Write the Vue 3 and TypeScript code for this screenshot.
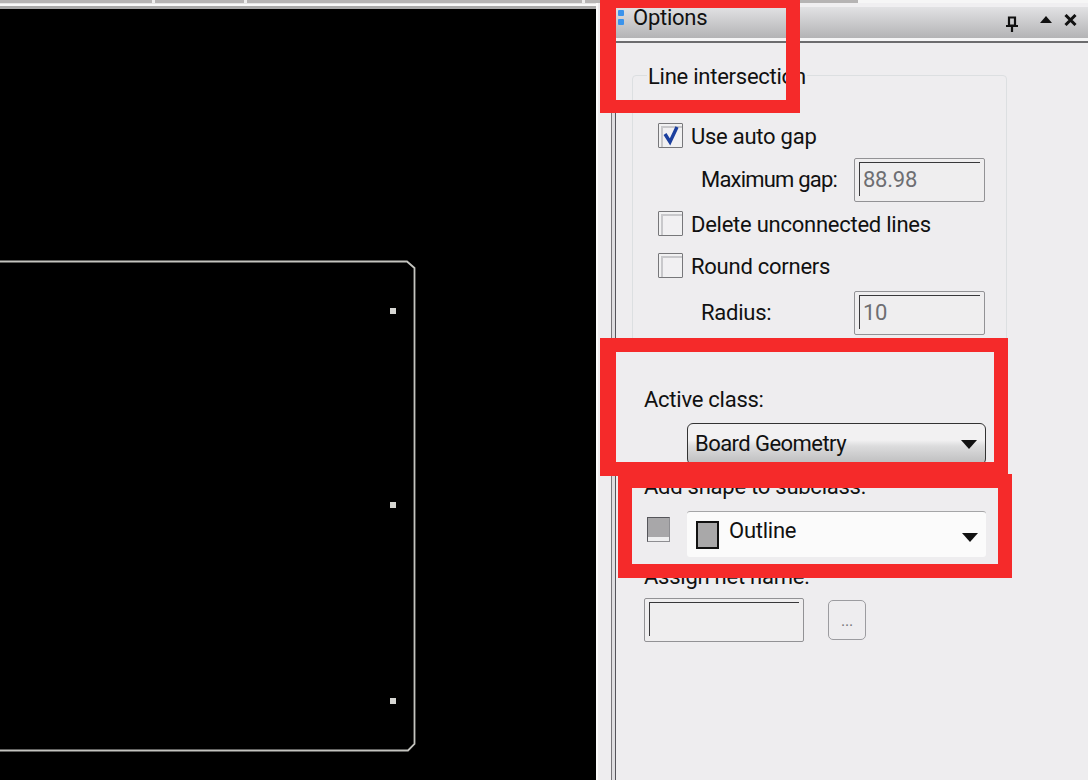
<script setup lang="ts">
// 选项面板截图复刻：左侧黑色画布 + 右侧 Options 面板 + 红色标注框
const pads: number[] = [308, 502, 698]
const topTabs: number[] = [155, 92, 338]
</script>

<template>
  <div class="app">
    <div class="top-strip">
      <div v-for="(w, i) in topTabs" :key="i" class="top-tab" :style="{ width: w + 'px' }" />
      <div class="top-rest" />
    </div>

    <div class="main">
      <div class="left">
        <div class="left-strip" />
        <div class="canvas">
          <svg class="board" width="596" height="771" viewBox="0 0 596 771">
            <path
              d="M-2 252.5H407L414.5 259V735L408 741.5H-2"
              fill="none"
              stroke="#c4c4bf"
              stroke-width="1.8"
            />
          </svg>
          <i v-for="y in pads" :key="y" class="pad" :style="{ top: y - 9 + 'px' }" />
        </div>
      </div>

      <div class="gutter" />

      <div class="panel">
        <div class="title-bar">
          <span class="grip"><i /><i /></span>
          <span class="title">Options</span>
          <span class="title-icons">
            <svg class="ic-pin" width="14" height="16" viewBox="0 0 14 16">
              <path d="M4 1.5H10V9.5H4ZM1 10H13M7 10V16" fill="none" stroke="#111" stroke-width="2.2" />
            </svg>
            <svg class="ic-up" width="12" height="7" viewBox="0 0 12 7">
              <path d="M6 0L12 7H0Z" fill="#111" />
            </svg>
            <svg class="ic-x" width="13" height="12" viewBox="0 0 13 12">
              <path d="M1.5 1L11.5 11M11.5 1L1.5 11" fill="none" stroke="#111" stroke-width="3" />
            </svg>
          </span>
        </div>

        <div class="panel-body">
          <div class="group">
            <span class="legend">Line intersection</span>
            <div class="row">
              <span class="check">
                <svg width="23" height="23" viewBox="0 0 23 23">
                  <path d="M6 10L11 18L18 3" fill="none" stroke="#1b3f9e" stroke-width="3.4" />
                </svg>
              </span>
              <span class="text">Use auto gap</span>
            </div>
            <div class="row sub r2">
              <span class="text tight">Maximum gap:</span>
              <span class="field"><span class="field-in">88.98</span></span>
            </div>
            <div class="row r3">
              <span class="check" />
              <span class="text">Delete unconnected lines</span>
            </div>
            <div class="row r4">
              <span class="check" />
              <span class="text">Round corners</span>
            </div>
            <div class="row sub r5">
              <span class="text">Radius:</span>
              <span class="field"><span class="field-in">10</span></span>
            </div>
          </div>

          <div class="label l-active">Active class:</div>
          <div class="select select-a">
            <span class="select-text">Board Geometry</span>
            <i class="caret" />
          </div>

          <div class="label l-sub">Add shape to subclass:</div>
          <div class="color-row">
            <span class="swatch" />
            <div class="select select-b">
              <span class="chip" />
              <span class="select-text">Outline</span>
              <i class="caret" />
            </div>
          </div>

          <div class="label l-net">Assign net name:</div>
          <div class="net-row">
            <span class="field net-field"><span class="field-in" /></span>
            <span class="dots">...</span>
          </div>
        </div>
      </div>
    </div>

    <!-- 红色标注框 -->
    <div class="mark mark-1" />
    <div class="mark mark-2" />
    <div class="mark mark-3" />
  </div>
</template>

<style>
html,
body {
  margin: 0;
  background: #eeedef;
}
</style>

<style scoped>
.app {
  position: relative;
  width: 1088px;
  height: 780px;
  overflow: hidden;
  display: flex;
  flex-direction: column;
  background: #eeedef;
  color: #111;
  font-family: Roboto, "Liberation Sans", sans-serif;
  font-size: 22px;
  line-height: 26px;
  letter-spacing: -0.25px;
}

.top-strip {
  display: flex;
  flex: none;
  height: 3px;
  background: #f6f6f6;
}

.top-tab {
  flex: none;
  height: 3px;
  background: #b6b4b4;
  border-right: 3px solid #eee;
  box-sizing: border-box;
}

.top-rest {
  width: 273px;
  height: 3px;
  background: #b6b4b4;
}

.main {
  flex: 1;
  display: flex;
  min-height: 0;
}

.left {
  flex: none;
  width: 596px;
  display: flex;
  flex-direction: column;
}

.left-strip {
  flex: none;
  height: 6px;
  box-sizing: border-box;
  background: #fafafa;
  border-top: 1px solid #e6e6e6;
  border-bottom: 3px solid #a9a9a9;
}

.canvas {
  position: relative;
  flex: 1;
  background: #000;
  overflow: hidden;
}

.board {
  position: absolute;
  left: 0;
  top: 0;
}

.pad {
  position: absolute;
  left: 390px;
  width: 6px;
  height: 6px;
  background: #d6d6d2;
}

.gutter {
  flex: none;
  width: 20px;
  box-sizing: border-box;
  background:
    linear-gradient(90deg,
      #fbfbfb 0 2px,
      #eeedef 2px 15px,
      #77767a 15px 16px,
      #dedde0 16px 19px,
      #55545a 19px 20px);
}

.panel {
  flex: 1;
  min-width: 0;
  display: flex;
  flex-direction: column;
  background: #f0eff1;
}

.title-bar {
  flex: none;
  height: 31px;
  margin-top: 4px;
  display: flex;
  align-items: flex-start;
  background: linear-gradient(#e2e2e4, #b3b3b5);
  position: relative;
  box-shadow: 0 3px 0 #f5f5f6, 0 5px 0 #6c6c6e;
}

.grip {
  display: flex;
  flex-direction: column;
  gap: 3px;
  margin: 3px 0 0 2px;
}

.grip i {
  display: block;
  width: 6px;
  height: 6px;
  background: #3a93ec;
  border-radius: 1px;
}

.title {
  margin: -2px 0 0 9px;
}

.title-icons {
  display: flex;
  align-items: flex-start;
  margin-left: auto;
  padding-right: 11px;
}

.ic-pin {
  margin-top: 9px;
}

.ic-up {
  margin: 9px 0 0 21px;
}

.ic-x {
  margin: 7px 0 0 12px;
}

.panel-body {
  flex: 1;
  padding-left: 16px;
  background: #eeedef;
  margin-top: 5px;
}

.group {
  position: relative;
  width: 375px;
  height: 270px;
  margin-top: 32px;
  box-sizing: border-box;
  padding: 46px 0 0 25px;
  border: 1px solid #dcdfe1;
  border-radius: 4px;
}

.legend {
  position: absolute;
  left: 14px;
  top: -12px;
  padding: 0 1px;
  background: #eeedef;
}

.row {
  display: flex;
  align-items: center;
  height: 26px;
}

.row .check + .text {
  padding-top: 3px;
}

.sub {
  height: 44px;
  padding-left: 43px;
}

.r2 {
  margin-top: 10px;
}

.r3 {
  margin-top: 8px;
}

.r4 {
  margin-top: 16px;
}

.r5 {
  margin-top: 13px;
}

.tight {
  letter-spacing: -0.8px;
}

.check {
  flex: none;
  width: 25px;
  height: 25px;
  box-sizing: border-box;
  margin-right: 8px;
  border: 1px solid #77777a;
  border-radius: 1px;
  background: #f1f0f2;
  box-shadow: inset 2px 2px 0 #f1f1f2, inset 4px 4px 0 #c8c8cb, inset -2px -2px 0 #f1f1f2;
}

.check svg {
  display: block;
}

.field {
  display: flex;
  box-sizing: border-box;
  width: 131px;
  height: 44px;
  padding: 3px 4px 5px;
  border: 1px solid #929295;
  border-radius: 2px;
  background: #efeeef;
}

.sub .field {
  margin-left: auto;
  margin-right: 21px;
}

.field-in {
  flex: 1;
  padding-left: 3px;
  border-top: 1px solid #38383a;
  border-left: 1px solid #38383a;
  color: #6e6e72;
  line-height: 34px;
}

.label {
  height: 26px;
  padding-left: 12px;
}

.l-active {
  margin-top: 42px;
}

.select {
  display: flex;
  align-items: center;
  box-sizing: border-box;
  width: 299px;
  margin-left: 55px;
  position: relative;
}

.select-a {
  height: 42px;
  margin-top: 10px;
  padding-left: 7px;
  border: 1px solid #333;
  border-radius: 6px;
  background: linear-gradient(#f2f1f2 0 40%, #dcdcdd 55%, #bdbdbe);
  letter-spacing: -0.55px;
}

.select-b {
  flex: none;
  height: 46px;
  margin-left: 17px;
  padding-left: 9px;
  background: #fbfbfb;
  border-top: 1px solid #a5a5a7;
  border-radius: 3px;
}

.caret {
  position: absolute;
  right: 8px;
  top: 16px;
  width: 0;
  height: 0;
  border-left: 8px solid transparent;
  border-right: 8px solid transparent;
  border-top: 9px solid #111;
}

.select-b .caret {
  top: 21px;
}

.l-sub {
  margin-top: 9px;
}

.color-row {
  display: flex;
  align-items: flex-start;
  margin-top: 11px;
}

.swatch {
  flex: none;
  width: 23px;
  height: 25px;
  box-sizing: border-box;
  margin: 6px 0 0 15px;
  border: 1px solid #55555a;
  border-right-color: #8e8e92;
  border-bottom-color: #8e8e92;
  background: linear-gradient(#a8a7a9 0 19px, #efeff0 19px);
}

.chip {
  flex: none;
  width: 23px;
  height: 28px;
  box-sizing: border-box;
  margin-right: 10px;
  border: 2px solid #111;
  background: #a9a8a9;
}

.select-b .select-text {
  margin-top: -8px;
}

.l-net {
  margin-top: 7px;
}

.net-row {
  display: flex;
  align-items: center;
  gap: 24px;
  margin-top: 8px;
  padding-left: 12px;
}

.net-field {
  width: 160px;
}

.dots {
  flex: none;
  width: 38px;
  height: 40px;
  box-sizing: border-box;
  border: 1px solid #9c9ca0;
  border-radius: 5px;
  text-align: center;
  font-size: 16px;
  line-height: 40px;
  color: #77777a;
}

.mark {
  position: absolute;
  box-sizing: border-box;
  border-style: solid;
  border-color: #f52a2a;
}

.mark-1 {
  left: 600px;
  top: 0;
  width: 200px;
  height: 113px;
  border-width: 8px 14px 13px 16px;
}

.mark-2 {
  left: 600px;
  top: 338px;
  width: 408px;
  height: 138px;
  border-width: 14px 14px 14px 16px;
}

.mark-3 {
  left: 618px;
  top: 474px;
  width: 394px;
  height: 104px;
  border-width: 14px 14px 14px 14px;
}
</style>
